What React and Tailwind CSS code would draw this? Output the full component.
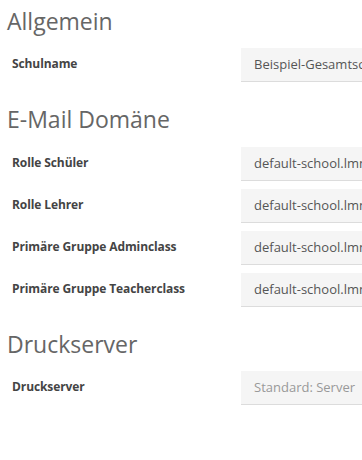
const font = { fontFamily: '"Open Sans", "Noto Sans", sans-serif' }

function Row({ label, value, placeholder }) {
  return (
    <div className="flex items-start">
      <div className="w-[234px] shrink-0 pl-[5px] pt-[8px] text-[12px] leading-[16px] font-bold tracking-[-0.1px] text-[#444]">{label}</div>
      <div className={"h-[34px] flex-1 min-w-[140px] bg-[#f5f5f5] border-b border-[#dcdcdc] pl-[13px] flex items-center text-[13px] whitespace-nowrap overflow-hidden " + (placeholder ? "text-[#999]" : "text-[#555]")}>
        {value}
      </div>
    </div>
  )
}

function App() {
  return (
    <div className="w-[362px] h-[460px] bg-white overflow-hidden pl-[7px]" style={font}>
      <h2 className="pt-[7px] text-[23px] leading-[28px] text-[#666] font-normal">Allgemein</h2>
      <div className="mt-[13px]">
        <Row label="Schulname" value="Beispiel-Gesamtschule" />
      </div>
      <h2 className="mt-[23px] text-[23px] leading-[28px] text-[#666] font-normal">E-Mail Domäne</h2>
      <div className="mt-[14px] flex flex-col gap-[8px]">
        <Row label="Rolle Schüler" value="default-school.lmn" />
        <Row label="Rolle Lehrer" value="default-school.lmn" />
        <Row label="Primäre Gruppe Adminclass" value="default-school.lmn" />
        <Row label="Primäre Gruppe Teacherclass" value="default-school.lmn" />
      </div>
      <h2 className="mt-[23px] text-[23px] leading-[28px] text-[#666] font-normal">Druckserver</h2>
      <div className="mt-[13px]">
        <Row label="Druckserver" value="Standard: Server" placeholder />
      </div>
    </div>
  )
}

export default App
